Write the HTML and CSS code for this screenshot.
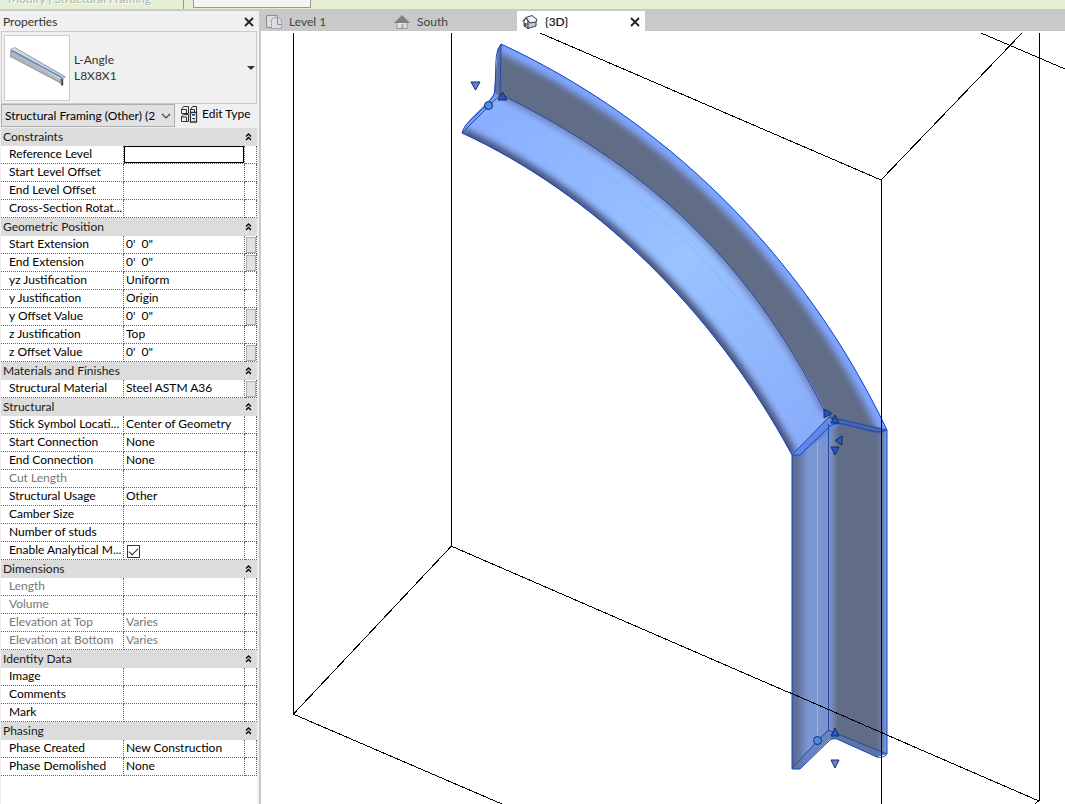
FILE: index.html
```
<!DOCTYPE html>
<html lang="en">
<head>
  <meta charset="UTF-8" />
  <meta name="viewport" content="width=device-width, initial-scale=1" />
  <title>Structural Framing - {3D}</title>
  <link rel="stylesheet" href="styles.css">
</head>
<body>
  <header class="ribbon">
    <span class="ribbon-title">Modify | Structural Framing</span>
    <span class="ribbon-box"></span>
  </header>

  <svg class="symbols" aria-hidden="true">
    <symbol id="chevrons" viewBox="0 0 7 8">
      <path d="M1 3.5L3.5 1L6 3.5M1 7L3.5 4.5L6 7" fill="none" stroke="#000" stroke-width="1.3"/>
    </symbol>
    <symbol id="close" viewBox="0 0 10 10">
      <path d="M1 1L9 9M9 1L1 9" fill="none" stroke="#222" stroke-width="1.8"/>
    </symbol>
  </svg>

  <div class="workspace">
    <aside class="properties">
      <div class="panel-title">
        <h1>Properties</h1>
        <button class="close" aria-label="Close properties"><svg><use href="#close"/></svg></button>
      </div>

      <button class="type-selector">
        <span class="thumb">
          <svg viewBox="0 0 66 66">
            <path d="M6 17L10 13L62 42L57 46Z" fill="#d4d8dc"/>
            <path d="M6 14V22L57 49V45Z" fill="#b4b8bc"/>
            <path d="M6 21L57 48" stroke="#999" fill="none"/>
            <path d="M7 15L59 43" stroke="#5f8fc4" stroke-width="1.6"/>
            <path d="M6 22V14L10 12L62 42L59 44V51L57 49V44" fill="none" stroke="#85898e" stroke-width="1"/>
            <path d="M59 44V51" stroke="#444" stroke-width="2"/>
          </svg>
        </span>
        <span class="type-name">L-Angle<br>L8X8X1</span>
        <svg class="caret" viewBox="0 0 8 4"><path d="M0 0H8L4 4Z" fill="#333"/></svg>
      </button>

      <div class="filter-row">
        <div class="filter">
          <select aria-label="Selection filter">
            <option>Structural Framing (Other) (2</option>
          </select>
          <svg viewBox="0 0 10 6"><path d="M1 1L5 5L9 1" fill="none" stroke="#444" stroke-width="1.2"/></svg>
        </div>
        <button class="edit-type">
          <svg viewBox="0 0 17 17" fill="none" stroke="#333">
            <path d="M.5 3.5L2.5 .5H7.5V7.5H.5ZM9.5 3.5L11.5 .5H15.5V6M9.5 3.5V6M.5 11L2.5 8.5H7.5V15.5H.5ZM.5 3.5H5.5V7.5M9.5 3.5H13.5V6M.5 11H5.5V15.5"/>
            <path d="M9.5 6.5H15.5V16H9.5Z" fill="#fff" stroke-width="1.3"/>
            <path d="M11 9H14" stroke="#2a6bc2" stroke-width="2"/>
            <path d="M11 12.5H14M12.5 14H13.5"/>
          </svg>
          Edit Type
        </button>
      </div>

      <table class="grid">
        <colgroup><col class="col-name"><col class="col-value"><col class="col-more"></colgroup>
        <tbody>
          <tr class="group"><th colspan="2">Constraints</th><th><button aria-label="Collapse Constraints"><svg><use href="#chevrons"/></svg></button></th></tr>
          <tr><td><label for="ref-level">Reference Level</label></td><td class="editing"><input type="text" id="ref-level"></td><td></td></tr>
          <tr><td>Start Level Offset</td><td></td><td></td></tr>
          <tr><td>End Level Offset</td><td></td><td></td></tr>
          <tr><td>Cross-Section Rotat...</td><td></td><td></td></tr>
        </tbody>
        <tbody>
          <tr class="group"><th colspan="2">Geometric Position</th><th><button aria-label="Collapse Geometric Position"><svg><use href="#chevrons"/></svg></button></th></tr>
          <tr><td>Start Extension</td><td>0'&nbsp; 0"</td><td><button class="more" aria-label="Associate Start Extension"></button></td></tr>
          <tr><td>End Extension</td><td>0'&nbsp; 0"</td><td><button class="more" aria-label="Associate End Extension"></button></td></tr>
          <tr><td>yz Justification</td><td>Uniform</td><td></td></tr>
          <tr><td>y Justification</td><td>Origin</td><td></td></tr>
          <tr><td>y Offset Value</td><td>0'&nbsp; 0"</td><td><button class="more" aria-label="Associate y Offset Value"></button></td></tr>
          <tr><td>z Justification</td><td>Top</td><td></td></tr>
          <tr><td>z Offset Value</td><td>0'&nbsp; 0"</td><td><button class="more" aria-label="Associate z Offset Value"></button></td></tr>
        </tbody>
        <tbody>
          <tr class="group"><th colspan="2">Materials and Finishes</th><th><button aria-label="Collapse Materials and Finishes"><svg><use href="#chevrons"/></svg></button></th></tr>
          <tr><td>Structural Material</td><td>Steel ASTM A36</td><td><button class="more" aria-label="Associate Structural Material"></button></td></tr>
        </tbody>
        <tbody>
          <tr class="group"><th colspan="2">Structural</th><th><button aria-label="Collapse Structural"><svg><use href="#chevrons"/></svg></button></th></tr>
          <tr><td>Stick Symbol Locati...</td><td>Center of Geometry</td><td></td></tr>
          <tr><td>Start Connection</td><td>None</td><td></td></tr>
          <tr><td>End Connection</td><td>None</td><td></td></tr>
          <tr class="readonly"><td>Cut Length</td><td></td><td></td></tr>
          <tr><td>Structural Usage</td><td>Other</td><td></td></tr>
          <tr><td>Camber Size</td><td></td><td></td></tr>
          <tr><td>Number of studs</td><td></td><td></td></tr>
          <tr><td><label for="analytical">Enable Analytical M...</label></td><td><input type="checkbox" id="analytical" checked></td><td></td></tr>
        </tbody>
        <tbody>
          <tr class="group"><th colspan="2">Dimensions</th><th><button aria-label="Collapse Dimensions"><svg><use href="#chevrons"/></svg></button></th></tr>
          <tr class="readonly"><td>Length</td><td></td><td></td></tr>
          <tr class="readonly"><td>Volume</td><td></td><td></td></tr>
          <tr class="readonly"><td>Elevation at Top</td><td>Varies</td><td></td></tr>
          <tr class="readonly"><td>Elevation at Bottom</td><td>Varies</td><td></td></tr>
        </tbody>
        <tbody>
          <tr class="group"><th colspan="2">Identity Data</th><th><button aria-label="Collapse Identity Data"><svg><use href="#chevrons"/></svg></button></th></tr>
          <tr><td>Image</td><td></td><td></td></tr>
          <tr><td>Comments</td><td></td><td></td></tr>
          <tr><td>Mark</td><td></td><td></td></tr>
        </tbody>
        <tbody>
          <tr class="group"><th colspan="2">Phasing</th><th><button aria-label="Collapse Phasing"><svg><use href="#chevrons"/></svg></button></th></tr>
          <tr><td>Phase Created</td><td>New Construction</td><td></td></tr>
          <tr><td>Phase Demolished</td><td>None</td><td></td></tr>
        </tbody>
      </table>
    </aside>

    <main class="view">
      <nav class="tabs">
        <a href="#level-1" class="tab">
          <svg viewBox="0 0 16 14" fill="#dcdde0" stroke="#8b8f98">
            <path d="M5 12.5H.5V.5H11V2"/>
            <path d="M5.5 4.5L8 2.5H12L15.5 5V13.5H5.5Z" stroke-dasharray="2 1"/>
            <path d="M11.5 2.5V9.5H15"/>
          </svg>
          Level 1
        </a>
        <a href="#south" class="tab">
          <svg viewBox="0 0 16 14">
            <path d="M3 7H13V13.5H3Z" fill="#e2e2e2" stroke="#999"/>
            <path d="M8 0L16 8H0Z" fill="#808080"/>
            <path d="M7 9H10V13H7Z" fill="#bbb"/>
          </svg>
          South
        </a>
        <div class="tab active">
          <a href="#3d">
            <svg viewBox="0 0 16 14" stroke="#333b48" stroke-linejoin="round">
              <path d="M2 6V11L6 13.5V6L4 3Z" fill="#fff"/>
              <path d="M6 6.5V13.5L14 11V5Z" fill="#c3cad6"/>
              <path d="M4 2.5L10 .5L15 4.5L14 7L8 8L4 2.5L.5 6.5" fill="#eef1f5"/>
              <path d="M3.5 8V11.5" stroke-width="2"/>
            </svg>
            {3D}
          </a>
          <button class="close" aria-label="Close view"><svg><use href="#close"/></svg></button>
        </div>
      </nav>

      <!-- model coordinates share the window's origin -->
      <svg class="model" viewBox="261 31 804 773" preserveAspectRatio="xMinYMin meet">
        <defs>
          <filter id="soft" filterUnits="userSpaceOnUse" x="440" y="20" width="480" height="780"><feGaussianBlur stdDeviation="3"/></filter>
          <clipPath id="web"><path d="M501 44C661 118 802 251.5 887 430L828 417C745.5 253 641.5 164.750 498 94Z"/></clipPath>
          <clipPath id="leg"><path d="M462 133C592 193 712 307 792 455L829 417C745.5 253 641.5 164.750 502 95L490 103Z"/></clipPath>
          <linearGradient id="leg-fill" gradientUnits="userSpaceOnUse" x1="480" y1="110" x2="810" y2="430">
            <stop offset="0" stop-color="#8aaeff"/>
            <stop offset=".55" stop-color="#9ac3ff"/>
            <stop offset="1" stop-color="#8aadfb"/>
          </linearGradient>
          <linearGradient id="post-left" gradientUnits="userSpaceOnUse" x1="792" y1="0" x2="829" y2="0">
            <stop offset="0" stop-color="#59678c"/>
            <stop offset=".15" stop-color="#61719c"/>
            <stop offset=".45" stop-color="#7d98d4"/>
            <stop offset="1" stop-color="#7a93cc"/>
          </linearGradient>
          <linearGradient id="post-right" gradientUnits="userSpaceOnUse" x1="829" y1="0" x2="887" y2="0">
            <stop offset="0" stop-color="#7e95cf"/>
            <stop offset=".16" stop-color="#616c87"/>
            <stop offset=".82" stop-color="#616c87"/>
            <stop offset=".93" stop-color="#6c80b2"/>
            <stop offset="1" stop-color="#7c9ff0"/>
          </linearGradient>
        </defs>

        <!-- section box, back edges -->
        <g class="box-edge">
          <path d="M293.5 33V714L451.5 546V33M451 546L1039 801M293 714L502 804"/>
          <path d="M540 33L881 180L1022 33M981 33L1065 69M1039.5 33V800L1035 804"/>
        </g>

        <!-- curved member -->
        <path d="M462 133C465 121 488 103 493 95C498 87 496 55 498 49L501 44L502 98L490 110Z" fill="#7b9bea"/>
        <path d="M498 49L501 44L500 97L494 92Z" fill="#5d709f"/>
        <path d="M501 44C661 118 802 251.5 887 430L828 417C745.5 253 641.5 164.750 499 94Z" fill="#616c87"/>
        <g clip-path="url(#web)">
          <path d="M501 44C661 118 802 251.5 887 430" fill="none" stroke="#7fa6ff" stroke-width="17" filter="url(#soft)"/>
        </g>
        <path d="M462 133C592 193 712 307 792 455L829 417C745.5 253 641.5 164.750 502 95L490 103Z" fill="url(#leg-fill)"/>
        <g clip-path="url(#leg)" fill="none">
          <path d="M462 133C592 193 712 307 792 455" stroke="#46527a" stroke-width="11" filter="url(#soft)"/>
          <path d="M502 95C641.5 164.750 745.5 253 825 412" stroke="#66719f" stroke-width="5" filter="url(#soft)"/>
        </g>
        <path d="M489 105C620 167 741 268 817 427" fill="none" stroke="#7fb9f5"/>

        <!-- vertical member -->
        <path d="M792 455L829 418V740L800 769H792Z" fill="url(#post-left)"/>
        <path d="M829 418L887 430V754L877 757L837 739H829Z" fill="url(#post-right)"/>
        <path d="M792 768L828 730L887 754L877 757L837 739L829 740L800 769Z" fill="#5d78b8" opacity=".6"/>
        <path d="M817.5 428V740" stroke="#84b8f5"/>

        <!-- mitre -->
        <path d="M792 455L829 417L840 424L800 455Z" fill="#6388e4"/>
        <path d="M829 417L887 430L877 432L835 424Z" fill="#4d64a6"/>

        <g class="outline">
          <path d="M501 44C661 118 802 251.5 887 430V754C885 757 880 758 877 757L839 740C835 738 832 738 829 741L800 769H792V455C712 307 592 193 462 133C465 121 478 115 485 106C491 99 495 96 495 88C496 71 495 58 498 49Z"/>
          <path d="M792 455H800L829 427C832 424 838 423 843 424L875 432Q883 433 887 430M829 417L887 430M792 455L829 417"/>
        </g>
        <path class="fold" d="M462 133L500 95L501 44M502 95C641.5 164.750 745.5 253 825 412M828.5 424V731M792 768L828 730L887 754"/>

        <!-- section box, front edges -->
        <path class="box-edge" d="M881.5 180V804M786 691L910 745"/>

        <g class="grip">
          <path class="pale" d="M471 82H480L475.5 90Z"/>
          <path class="pale" d="M831 760H839L835 768Z"/>
          <path d="M498 100H507L502.5 92ZM831 423H839L835 415ZM831 736H839L835 728ZM831 447H839L835 455ZM824 409V418L832 413.5ZM842 436V445L835 440.5Z"/>
          <circle cx="488.5" cy="105.5" r="4"/>
          <circle cx="817.5" cy="740.5" r="4"/>
        </g>
      </svg>
    </main>
  </div>
</body>
</html>
```
FILE: styles.css
```
* {
  box-sizing: border-box;
}

body {
  margin: 0;
  height: 100vh;
  display: flex;
  flex-direction: column;
  overflow: hidden;
  background: #c9c9c9;
  color: #000;
  font-family: Lato, "Open Sans", sans-serif;
  font-size: 12px;
  line-height: 16px;
}

button {
  border: none;
  padding: 0;
  background: none;
  color: inherit;
  font: inherit;
}

a {
  color: inherit;
  text-decoration: none;
}

.symbols {
  display: none;
}

.ribbon {
  flex: none;
  display: flex;
  align-items: flex-end;
  height: 9px;
  overflow: hidden;
  background: #e4efd6;
}

.ribbon-title {
  width: 184px;
  height: 18px;
  padding-left: 8px;
  border-right: 1px solid #999;
  color: #b0b5ab;
  text-shadow: 1px 1px #fff;
  white-space: nowrap;
}

.ribbon-box {
  width: 118px;
  height: 18px;
  margin: 0 0 1px 9px;
  border: 1px solid #9a9a9a;
  background: #f4f4f4;
}

.workspace {
  flex: 1;
  display: flex;
  min-height: 0;
  padding-top: 2px;
}

/* Properties palette */
.properties {
  flex: none;
  display: flex;
  flex-direction: column;
  width: 259px;
  padding: 0 2px 0 1px;
  background: #f0f0f0;
}

.properties::after {
  content: "";
  flex: 1;
  background: #fff;
}

.panel-title {
  display: flex;
  align-items: center;
  justify-content: space-between;
  height: 20px;
  padding: 2px 2px 0;
}

.panel-title h1 {
  margin: 0;
  font-size: 12px;
  font-weight: normal;
  color: #333;
}

.close {
  width: 12px;
  height: 12px;
}

.close svg {
  display: block;
  width: 10px;
  height: 10px;
  margin: 1px;
}

.type-selector {
  display: flex;
  align-items: center;
  width: 100%;
  height: 73px;
  padding: 0 1px 0 2px;
  border: 1px solid #ccc;
  color: #333;
  text-align: left;
}

.thumb {
  width: 66px;
  height: 66px;
  border: 1px solid #ccc;
  background: #fff;
}

.thumb svg {
  display: block;
}

.type-name {
  flex: 1;
  padding-left: 4px;
}

.caret {
  width: 8px;
  height: 4px;
}

.filter-row {
  display: flex;
  align-items: flex-start;
  gap: 6px;
  height: 24px;
}

.filter {
  position: relative;
  width: 174px;
}

.filter select {
  display: block;
  width: 100%;
  height: 23px;
  padding: 0 18px 0 3px;
  border: 1px solid #adadad;
  border-radius: 0;
  background: #e1e1e1;
  color: #000;
  font: inherit;
  appearance: none;
}

.filter svg {
  position: absolute;
  top: 9px;
  right: 4px;
  width: 10px;
  height: 6px;
  pointer-events: none;
}

.edit-type {
  display: flex;
  align-items: center;
  gap: 4px;
  height: 20px;
}

.edit-type svg {
  width: 17px;
  height: 17px;
}

/* Parameter grid */
.grid {
  width: 256px;
  table-layout: fixed;
  border-spacing: 0;
  background: #fff;
}

.col-name {
  width: 123px;
}

.col-value {
  width: 121px;
}

.grid th,
.grid td {
  height: 18px;
  padding: 0;
  line-height: 16px;
  white-space: nowrap;
}

.grid th {
  padding-left: 2px;
  background: #dcdcdc;
  color: #1a1a1a;
  font-weight: normal;
  text-align: left;
}

.grid th button {
  display: block;
}

.grid th svg {
  display: block;
  width: 7px;
  height: 8px;
}

.grid td {
  padding-left: 2px;
  border-right: 1px dotted #666;
  border-bottom: 1px dotted #666;
  vertical-align: top;
}

.grid td:first-child {
  padding-left: 8px;
}

.grid td:last-child {
  padding: 1px 0 0 1px;
}

.grid th:last-child {
  padding-left: 0;
}

.grid td.editing {
  padding: 0;
}

.readonly {
  color: #777;
}

.grid input[type="text"] {
  display: block;
  width: 100%;
  height: 17px;
  padding: 0 2px;
  border: 1px solid #000;
  border-radius: 0;
  background: #fff;
  font: inherit;
}

.grid input[type="checkbox"] {
  display: block;
  width: 13px;
  height: 13px;
  margin: 3px 1px 1px;
  border: 1px solid #333;
  background: #fff;
  appearance: none;
}

.grid input[type="checkbox"]:checked::after {
  content: "";
  display: block;
  width: 8px;
  height: 4px;
  margin: 2px 1px;
  border-left: 1px solid #222;
  border-bottom: 1px solid #222;
  transform: rotate(-45deg);
}

.more {
  display: block;
  width: 10px;
  height: 16px;
  border: 1px solid #adadad;
  background: #e1e1e1;
}

/* Drawing area */
.view {
  flex: 1;
  display: flex;
  flex-direction: column;
  min-width: 0;
  margin-left: 2px;
}

.tabs {
  flex: none;
  display: flex;
  height: 20px;
  color: #444;
}

.tab {
  display: flex;
  align-items: center;
  width: 128px;
  padding: 1px 4px 0 5px;
}

.tab,
.tab a {
  gap: 7px;
}

.tab a {
  display: flex;
  align-items: center;
}

.tab svg {
  flex: none;
}

.tab > svg,
.tab a svg {
  width: 16px;
  height: 14px;
}

.tab.active {
  justify-content: space-between;
  background: #fff;
  color: #222;
  font-weight: 600;
}

.model {
  flex: 1;
  min-height: 0;
  width: 100%;
  background: #fff;
}

.box-edge {
  fill: none;
  stroke: #000;
  shape-rendering: crispEdges;
}

.outline {
  fill: none;
  stroke: #1046c4;
}

.fold {
  fill: none;
  stroke: #1f48a8;
}

.grip {
  fill: #2457c8;
  stroke: #1a2a50;
}

.grip .pale {
  fill: #5b86e6;
}

.grip circle {
  fill: #4b8cf0;
}
```
